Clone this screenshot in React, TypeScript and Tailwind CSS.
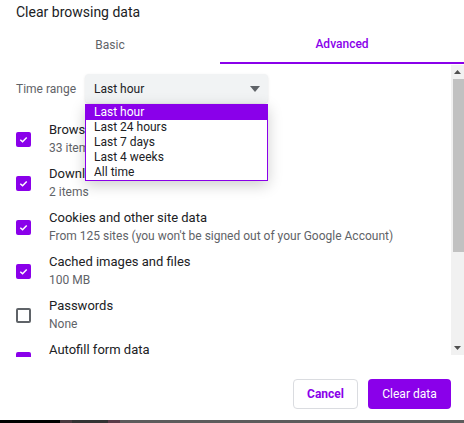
import React from 'react';

const PURPLE = 'bg-[#8a00ea]';

type Row = { title: string; sub: string; checked: boolean };

const rows: Row[] = [
  { title: 'Browsing history', sub: '33 items', checked: true },
  { title: 'Download history', sub: '2 items', checked: true },
  { title: 'Cookies and other site data', sub: "From 125 sites (you won't be signed out of your Google Account)", checked: true },
  { title: 'Cached images and files', sub: '100 MB', checked: true },
  { title: 'Passwords', sub: 'None', checked: false },
  { title: 'Autofill form data', sub: '', checked: true },
];

const options = ['Last hour', 'Last 24 hours', 'Last 7 days', 'Last 4 weeks', 'All time'];

const Checkbox: React.FC<{ checked: boolean }> = ({ checked }) =>
  checked ? (
    <div className={`w-[15px] h-[15px] rounded-[2px] ${PURPLE} flex items-center justify-center shrink-0`}>
      <svg width="11" height="11" viewBox="0 0 12 12">
        <path d="M2.5 6.2 L5 8.5 L9.5 3.8" fill="none" stroke="white" strokeWidth="1.6" />
      </svg>
    </div>
  ) : (
    <div className="w-[15px] h-[15px] rounded-[2px] border-2 border-[#5f6368] shrink-0" />
  );

export default function App() {
  return (
    <div className="w-[464px] h-[423px] bg-white flex flex-col overflow-hidden font-['Roboto',sans-serif]">
      {/* Titel */}
      <div className="h-[26px] pl-4 pt-[1px] text-[14px] leading-[22px] text-[#202124]">Clear browsing data</div>

      {/* Tabs */}
      <div className="flex h-[38px]">
        <div className="w-[220px] flex items-center justify-center text-[12px] text-[#5f6368] pb-[1px]">Basic</div>
        <div className="flex-1 flex items-center justify-center text-[12px] font-medium text-[#8a00ea] border-b-2 border-[#8a00ea]">
          Advanced
        </div>
      </div>

      {/* Inhalt mit Scrollbar */}
      <div className="flex h-[293px]">
        <div className="flex-1 overflow-hidden relative">
          <div className="flex items-center mt-[10px] pl-4 h-[29px]">
            <div className="w-[69px] text-[12px] text-[#5f6368]">Time range</div>
            <div className="relative w-[183px] h-[29px]">
              <div className="h-full bg-[#f1f3f4] rounded-[4px] shadow-sm flex items-center justify-between pl-[9px] pr-[8px] text-[12px] text-[#202124]">
                <span>Last hour</span>
                <svg width="10" height="6" viewBox="0 0 10 6">
                  <path d="M0 0 L10 0 L5 6 Z" fill="#5f6368" />
                </svg>
              </div>
              {/* Aufgeklappte Liste */}
              <div className="absolute left-0 top-[30px] w-full bg-white border border-[#8a00ea] shadow-[0_4px_14px_rgba(0,0,0,0.2)] z-10">
                {options.map((o, i) => (
                  <div
                    key={o}
                    className={`pl-[8px] text-[12px] leading-[15px] ${
                      i === 0 ? 'bg-[#8a00ea] text-white' : 'text-[#202124]'
                    }`}
                  >
                    {o}
                  </div>
                ))}
              </div>
            </div>
          </div>

          <div className="mt-[14px]">
            {rows.map((r) => (
              <div key={r.title} className="h-[44px] flex items-center pl-4">
                <Checkbox checked={r.checked} />
                <div className="ml-[18px]">
                  <div className="text-[13px] leading-[18px] text-[#202124]">{r.title}</div>
                  <div className="text-[12px] leading-[18px] text-[#5f6368] whitespace-nowrap">{r.sub || '\u00a0'}</div>
                </div>
              </div>
            ))}
          </div>
        </div>

        {/* Scrollbar */}
        <div className="w-[13px] bg-[#f1f1f1] flex flex-col mt-[1px] mb-[2px]">
          <div className="h-[14px] flex items-center justify-center">
            <svg width="7" height="4" viewBox="0 0 7 4">
              <path d="M0 4 L7 4 L3.5 0 Z" fill="#505050" />
            </svg>
          </div>
          <div className="h-[173px] ml-[2px] bg-[#c1c1c1]" />
          <div className="flex-1" />
          <div className="h-[14px] flex items-center justify-center">
            <svg width="7" height="4" viewBox="0 0 7 4">
              <path d="M0 0 L7 0 L3.5 4 Z" fill="#505050" />
            </svg>
          </div>
        </div>
      </div>

      {/* Buttons */}
      <div className="h-[63px] flex justify-end items-start pt-[22px] pr-[13px] gap-[10px]">
        <button className="h-[30px] w-[65px] rounded-[4px] border border-[#dadce0] bg-white text-[12px] font-bold text-[#8a00ea]">
          Cancel
        </button>
        <button className={`h-[30px] w-[83px] rounded-[4px] ${PURPLE} text-[12px] text-white`}>Clear data</button>
      </div>

      {/* Dunkler Streifen unten */}
      <div className="h-[3px] flex">
        <div className="w-[60px] bg-black" />
        <div className="w-[12px] bg-[#4a3a40]" />
        <div className="w-[36px] bg-[#333]" />
        <div className="w-[12px] bg-[#5a3a48]" />
        <div className="flex-1 bg-[#5c5c5c]" />
      </div>
    </div>
  );
}
